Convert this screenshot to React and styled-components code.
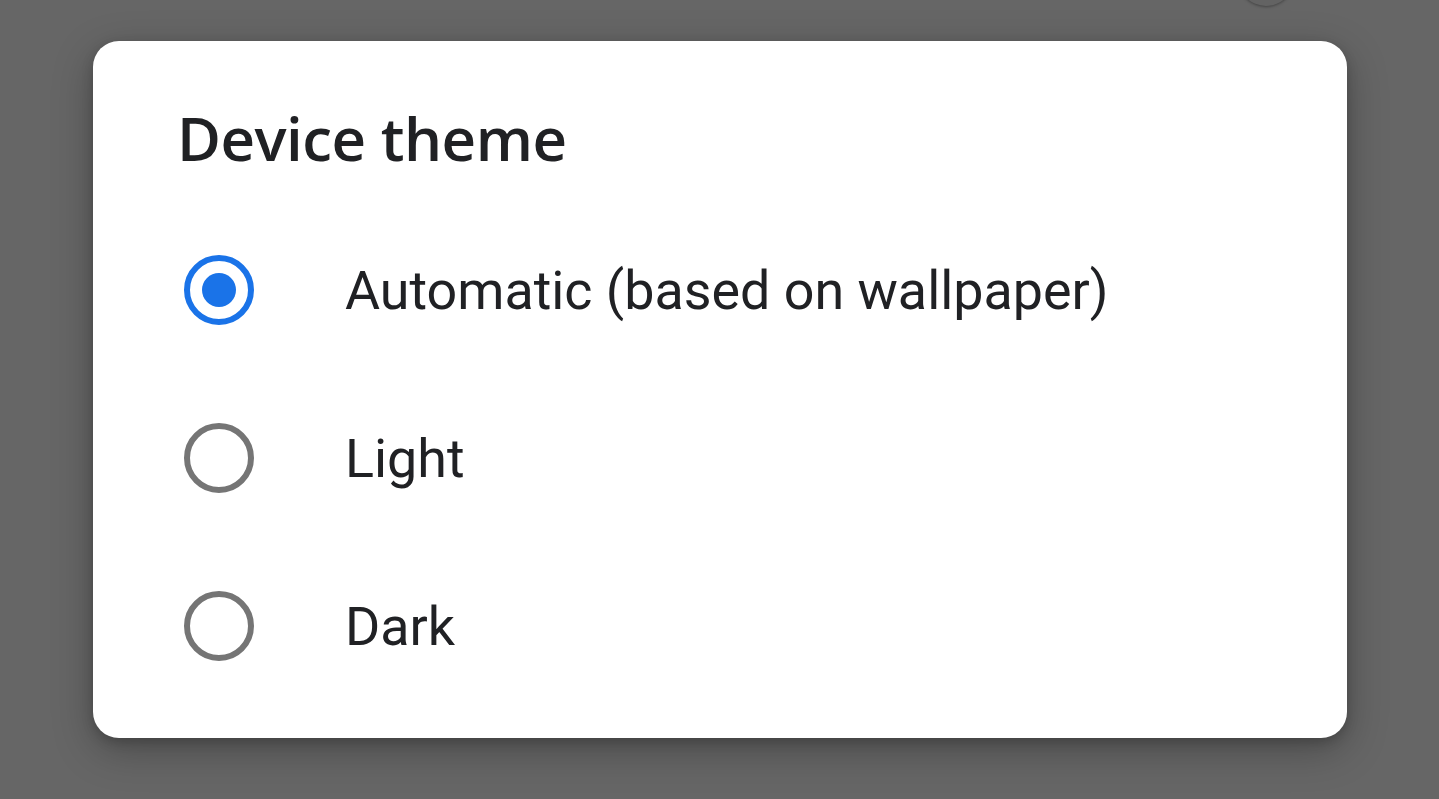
import React, { useState } from "react";
import styled, { createGlobalStyle } from "styled-components";

const Global = createGlobalStyle`
  html, body { margin: 0; padding: 0; }
  body { background: #666666; overflow: hidden; }
`;

const Screen = styled.div`
  position: relative;
  width: 1439px;
  height: 799px;
  background: #666666;
  box-sizing: border-box;
  padding: 41px 92px 0 93px;
  overflow: hidden;
`;

const PeekButton = styled.div`
  position: absolute;
  left: 1238px;
  top: -50px;
  width: 56px;
  height: 56px;
  border-radius: 50%;
  background: #636363;
  box-shadow: 0 1px 3px rgba(0, 0, 0, 0.35);
`;

const Dialog = styled.div`
  width: 1254px;
  height: 697px;
  box-sizing: border-box;
  background: #ffffff;
  border-radius: 26px;
  box-shadow: 0 12px 40px rgba(0, 0, 0, 0.28), 0 4px 12px rgba(0, 0, 0, 0.18);
  padding: 67px 0 0 86px;
  display: flex;
  flex-direction: column;
`;

const Title = styled.h2`
  margin: 0 0 0 -2px;
  font-family: "Open Sans", "Noto Sans", sans-serif;
  font-weight: 600;
  font-size: 60px;
  line-height: 1;
  letter-spacing: -0.5px;
  color: #202124;
`;

const Options = styled.div`
  display: flex;
  flex-direction: column;
  margin-top: 38px;
`;

const Row = styled.label`
  display: flex;
  align-items: center;
  height: 168px;
  cursor: pointer;
`;

const RadioRing = styled.span`
  width: 70px;
  height: 70px;
  margin-left: 5px;
  box-sizing: border-box;
  border-radius: 50%;
  border: 6px solid ${(p) => (p.$checked ? "#1a73e8" : "#757575")};
  display: flex;
  align-items: center;
  justify-content: center;
  flex-shrink: 0;
`;

const RadioDot = styled.span`
  width: 34px;
  height: 34px;
  border-radius: 50%;
  background: #1a73e8;
`;

const OptionText = styled.span`
  margin-left: 91px;
  font-family: Roboto, "Liberation Sans", sans-serif;
  font-size: 53.8px;
  color: #202124;
`;

const options = ["Automatic (based on wallpaper)", "Light", "Dark"];

export default function App() {
  const [sel, setSel] = useState(0);
  return (
    <Screen>
      <Global />
      <PeekButton />
      <Dialog>
        <Title>Device theme</Title>
        <Options>
          {options.map((o, i) => (
            <Row key={o} onClick={() => setSel(i)}>
              <RadioRing $checked={sel === i}>{sel === i && <RadioDot />}</RadioRing>
              <OptionText>{o}</OptionText>
            </Row>
          ))}
        </Options>
      </Dialog>
    </Screen>
  );
}
